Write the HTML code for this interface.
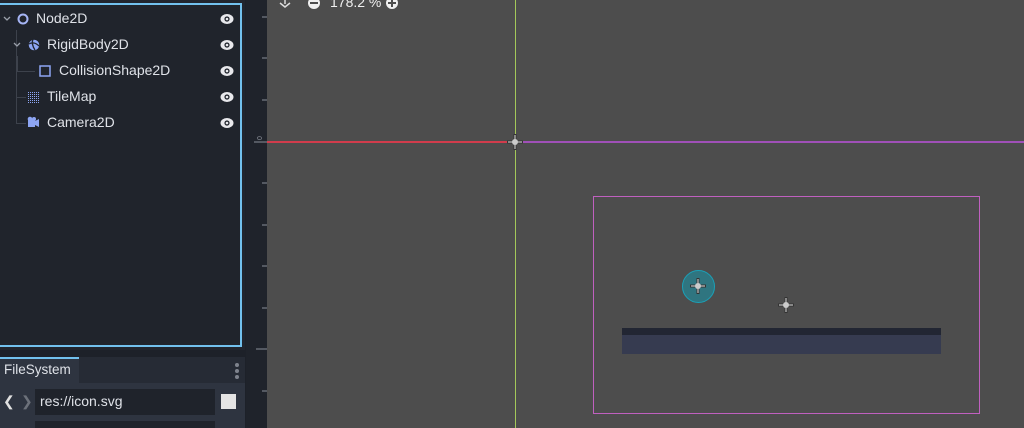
<!DOCTYPE html>
<html><head><meta charset="utf-8"><style>
*{margin:0;padding:0;box-sizing:border-box}
body{width:1024px;height:428px;overflow:hidden;background:#1d2129;font-family:"Liberation Sans",sans-serif;position:relative}
.abs{position:absolute}
.t{color:#dfe2e8;font-size:14px;position:absolute}
</style></head><body>
<!-- scene panel -->
<div class="abs" style="left:0;top:0;width:245px;height:350px;background:#21252e"></div>
<div class="abs" style="left:-2px;top:3px;width:244px;height:344px;border:2px solid #72c1ee;background:#20242c"></div>
<!-- tree lines -->
<div class="abs" style="left:16px;top:30px;width:1px;height:94px;background:#3d424c"></div>
<div class="abs" style="left:16px;top:97px;width:10px;height:1px;background:#3d424c"></div>
<div class="abs" style="left:16px;top:123px;width:10px;height:1px;background:#3d424c"></div>
<div class="abs" style="left:17px;top:56px;width:1px;height:15px;background:#3d424c"></div>
<div class="abs" style="left:17px;top:71px;width:18px;height:1px;background:#3d424c"></div>
<svg class="abs" style="left:0;top:0" width="245" height="140">
<defs><pattern id="g" width="2" height="2" patternUnits="userSpaceOnUse"><rect width="1" height="1" fill="#8da5f3"/></pattern></defs>
<g fill="none" stroke="#9aa0aa" stroke-width="1.3"><path d="M4 17l3 3 3-3"/><path d="M14 43l3 3 3-3"/></g>
<circle cx="23" cy="19" r="4.5" fill="none" stroke="#a6b5f5" stroke-width="2"/>
<circle cx="34" cy="45" r="6" fill="#8da5f3"/><path d="M29 44q5-3 10 2M33 39q-2 5 2 11" stroke="#20242c" stroke-width="1.3" fill="none"/>
<circle cx="34" cy="45" r="6" fill="none" stroke="#20242c" stroke-width="1.5"/>
<rect x="40" y="66" width="10" height="10" fill="none" stroke="#8da5f3" stroke-width="1.5"/>
<rect x="28" y="91" width="12" height="12" fill="url(#g)"/>
<path d="M28 119h7v2l4-2v8l-4-2v2h-7z" fill="#8da5f3"/><circle cx="30" cy="119" r="2.3" fill="#8da5f3"/><circle cx="34" cy="119" r="2" fill="#8da5f3"/>
<g fill="#e8e8ec"><g id="e"><ellipse cx="227" cy="19" rx="6.5" ry="5"/><circle cx="227" cy="19" r="2.6" fill="#20242c"/><circle cx="227" cy="19" r="1.3"/></g>
<use href="#e" y="26"/><use href="#e" y="52"/><use href="#e" y="78"/><use href="#e" y="104"/></g>
</svg>
<div class="t" style="left:36px;top:10px">Node2D</div>
<div class="t" style="left:47px;top:36px">RigidBody2D</div>
<div class="t" style="left:59px;top:62px">CollisionShape2D</div>
<div class="t" style="left:47px;top:88px">TileMap</div>
<div class="t" style="left:47px;top:114px">Camera2D</div>
<!-- filesystem -->
<div class="abs" style="left:0;top:357px;width:245px;height:71px;background:#262b35"></div>
<div class="abs" style="left:0;top:357px;width:79px;height:26px;background:#2e3440;border-top:2px solid #72c1ee"></div>
<div class="t" style="left:4px;top:362px;font-size:13.5px">FileSystem</div>
<div class="abs" style="left:0;top:383px;width:245px;height:45px;background:#2e3440"></div>
<div class="abs" style="left:235px;top:363px;width:4px;height:4px;border-radius:2px;background:#7e838d;box-shadow:0 6px #7e838d,0 12px #7e838d"></div>
<div class="t" style="left:3px;top:393px;font-size:14px;color:#e0e0e0">&#x276E;</div>
<div class="t" style="left:21px;top:393px;font-size:14px;color:#6c717a">&#x276F;</div>
<div class="abs" style="left:35px;top:389px;width:180px;height:26px;background:#1f232b"></div>
<div class="t" style="left:40px;top:393px;font-size:14px">res://icon.svg</div>
<div class="abs" style="left:221px;top:394px;width:15px;height:15px;background:#e4e4e4"></div>
<div class="abs" style="left:35px;top:421px;width:180px;height:7px;background:#1f232b"></div>
<!-- ruler -->
<div class="abs" style="left:246px;top:0;width:21px;height:428px;background:#1f232b"></div>
<svg class="abs" style="left:246px;top:0" width="21" height="428">
<g stroke="#8a8f98" stroke-width="1"><path d="M16 17h5M16 58h5M16 100h5M16 183h5M16 225h5M16 266h5M16 308h5M10 349h11M16 391h5M8 142h13"/></g>
<text x="12" y="140" fill="#8a8f98" font-size="7" transform="rotate(-90 14 138)">0</text>
</svg>
<!-- viewport -->
<div class="abs" style="left:267px;top:0;width:757px;height:428px;background:#4d4d4d"></div>
<div class="abs" style="left:267px;top:141px;width:248px;height:2px;background:#d13c4c"></div>
<div class="abs" style="left:515px;top:141px;width:509px;height:2px;background:#a050b8"></div>
<div class="abs" style="left:515px;top:0;width:1px;height:428px;background:#a4c85a"></div>
<div class="abs" style="left:593px;top:196px;width:387px;height:218px;border:1px solid #c060c0"></div>
<div class="abs" style="left:622px;top:328px;width:319px;height:26px;background:#363b50;border-top:7px solid #222633"></div>
<div class="abs" style="left:682px;top:270px;width:33px;height:33px;border-radius:50%;background:#2f7580;border:1px solid #1aa1b8"></div>
<svg class="abs" style="left:0;top:0" width="1024" height="428">
<g id="c"><path d="M515 134v16M507 142h16" stroke="#333" stroke-width="3"/><path d="M515 135v14M508 142h14" stroke="#ddd" stroke-width="1"/><circle cx="515" cy="142" r="3" fill="#ccc"/></g>
<use href="#c" x="183" y="144"/><use href="#c" x="271" y="163"/>
<g fill="#f0f0f0"><circle cx="314" cy="3" r="6"/><circle cx="392" cy="3" r="6"/></g>
<path d="M310 3h8" stroke="#4d4d4d" stroke-width="2"/><path d="M388 3h8M392 -1v8" stroke="#4d4d4d" stroke-width="2"/>
<path d="M280 3l5 4 5-4M285 -2v6" stroke="#ddd" stroke-width="1.5" fill="none"/>
</svg>
<div class="t" style="left:330px;top:-6px;font-size:14px;color:#f0f0f0">178.2 %</div>
</body></html>
